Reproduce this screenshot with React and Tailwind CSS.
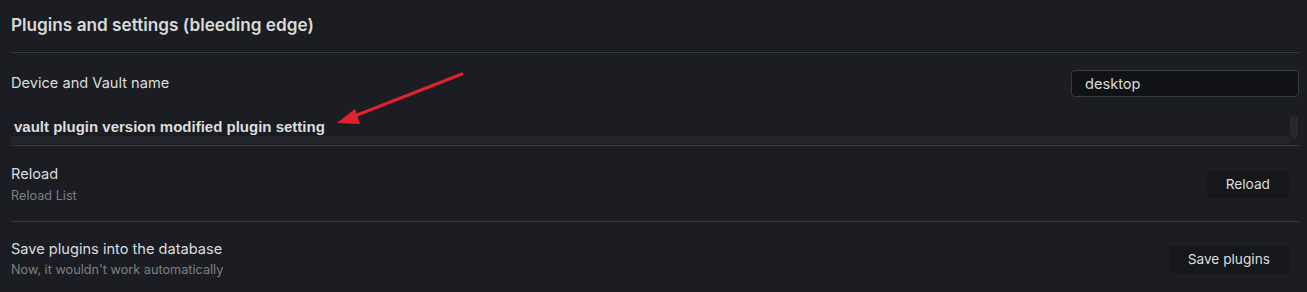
export default function App() {
  return (
    <div className="w-[1307px] h-[292px] overflow-hidden bg-[#1b1d22] text-[#dcddde] font-['Inter',sans-serif] relative">
      <div className="pl-[11px] pr-[8px]">
        {/* Heading */}
        <div className="h-[53px] flex items-center border-b border-[#363842]">
          <h2 className="text-[17.2px] font-semibold text-[#dadada] pb-[2px]">
            Plugins and settings (bleeding edge)
          </h2>
        </div>

        {/* Device and Vault name */}
        <div className="flex items-center justify-between pt-[17px] pb-[18px]">
          <div className="text-[14.6px]">Device and Vault name</div>
          <input
            defaultValue="desktop"
            className="w-[228px] h-[27px] bg-[#111215] border border-[#393b43] rounded-[4px] px-[13px] text-[14.6px] text-[#dcddde] outline-none"
          />
        </div>

        {/* plugin list */}
        <div className="relative h-[31px] border-b border-[#363842]">
          <div className="pl-[3px] pt-[1px] font-['Liberation_Sans',sans-serif] font-bold text-[15px] text-[#dcddde]">
            vault plugin version modified plugin setting
          </div>
          <div className="absolute left-0 right-[9px] bottom-[1px] h-[8px] bg-[#23252b] rounded-r-[4px]" />
          <div className="absolute right-[1px] top-[0px] w-[8px] h-[23px] bg-[#25272d] rounded-[4px]" />
        </div>

        {/* Reload */}
        <div className="flex items-center justify-between h-[76px] border-b border-[#363842]">
          <div className="pt-[2px]">
            <div className="text-[14.6px] leading-[20px]">Reload</div>
            <div className="text-[12.7px] leading-[18px] text-[#7d7f85] mt-[3px]">Reload List</div>
          </div>
          <button className="h-[27px] px-[19px] mr-[10px] mt-[2px] bg-[#16171b] rounded-[4px] text-[13.7px] text-[#dcddde]">
            Reload
          </button>
        </div>

        {/* Save plugins */}
        <div className="flex items-center justify-between h-[74px]">
          <div>
            <div className="text-[14.6px] leading-[20px]">Save plugins into the database</div>
            <div className="text-[12.7px] leading-[18px] text-[#7d7f85] mt-[2px]">Now, it wouldn't work automatically</div>
          </div>
          <button className="h-[27px] px-[19px] mr-[10px] bg-[#16171b] rounded-[4px] text-[13.7px] text-[#dcddde]">
            Save plugins
          </button>
        </div>
      </div>

      {/* annotation arrow */}
      <svg className="absolute left-0 top-0 pointer-events-none" width="1307" height="292">
        <line x1="462" y1="74" x2="352" y2="117" stroke="#e0212e" strokeWidth="3" strokeLinecap="round" />
        <polygon points="337,123 355,109 360,124" fill="#e0212e" />
      </svg>
    </div>
  );
}
